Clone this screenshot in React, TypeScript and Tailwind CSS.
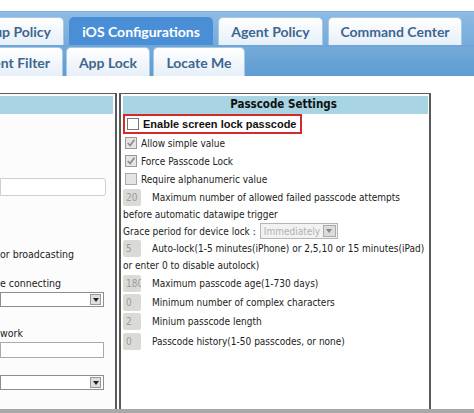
const tabText = "font-['Lato','Liberation_Sans',sans-serif] font-bold text-[14px]";
const bodyFont = "font-['DejaVu_Sans_Condensed','Liberation_Sans',sans-serif] text-[10px] text-[#222]";

function Tab({ label, w, active, edge }: { label: string; w: string; active?: boolean; edge?: boolean }) {
  return (
    <div
      className={`${w} h-full shrink-0 rounded-t-[5px] flex items-center whitespace-nowrap ${
        edge ? "justify-end pr-[12px]" : "justify-center"
      } ${tabText} ${
        active
          ? "bg-[#4a8fd6] text-white"
          : "bg-gradient-to-b from-white to-[#e6eff8] text-[#3d6690] border-x border-t border-[#a9c8e4]"
      }`}
    >
      {label}
    </div>
  );
}

function Check({ checked, bold, label }: { checked?: boolean; bold?: boolean; label: string }) {
  return (
    <div className="flex items-center gap-[4px] h-full whitespace-nowrap">
      <span
        className={`w-[12px] h-[12px] border shrink-0 flex items-center justify-center ${
          checked ? "border-[#9a9a9a] bg-[#e4e4e4]" : bold ? "border-[#777] bg-white" : "border-[#aaa] bg-[#e4e4e4]"
        }`}
      >
        {checked && (
          <svg viewBox="0 0 12 12" className="w-[10px] h-[10px]">
            <path d="M2 6 L5 9 L10 2" fill="none" stroke="#8a8a8a" strokeWidth="2" />
          </svg>
        )}
      </span>
      <span className={bold ? "font-['Liberation_Sans',sans-serif] font-bold text-[11px] text-[#111]" : ""}>{label}</span>
    </div>
  );
}

function NumRow({ value, label }: { value: string; label: string }) {
  return (
    <div className="flex items-center h-full whitespace-nowrap">
      <span className="w-[18px] h-[17px] bg-[#dcdad6] rounded-[2px] text-[#9b9b9b] pl-[3px] flex items-center overflow-hidden shrink-0">
        {value}
      </span>
      <span className="ml-[11px]">{label}</span>
    </div>
  );
}

function Select({ w }: { w: string }) {
  return (
    <div className={`${w} h-[15px] border border-[#8d8d8d] bg-white flex justify-end items-center pr-[2px]`}>
      <span className="w-[11px] h-[11px] bg-[#dedede] border border-[#999] flex items-center justify-center">
        <span className="w-0 h-0 border-x-[3px] border-x-transparent border-t-[4px] border-t-[#222]" />
      </span>
    </div>
  );
}

export default function App() {
  return (
    <div className={`w-[474px] h-[413px] overflow-hidden bg-white flex flex-col ${bodyFont}`}>
      <div className="h-[11px] bg-white shrink-0" />
      {/* tab bar */}
      <div className="h-[65px] shrink-0 bg-gradient-to-b from-[#8dbbe3] to-[#5e9cd2] border-t border-[#7fb0dc] flex flex-col">
        <div className="h-[5px]" />
        <div className="h-[28px] flex gap-[5px] ml-[-60px]">
          <Tab label="Group Policy" w="w-[124px]" edge />
          <Tab label="iOS Configurations" w="w-[144px]" active />
          <Tab label="Agent Policy" w="w-[105px]" />
          <Tab label="Command Center" w="w-[134px]" />
        </div>
        <div className="h-[2px] bg-[#6fa6d6]" />
        <div className="h-[29px] flex gap-[3px] ml-[-60px]">
          <Tab label="Content Filter" w="w-[123px]" edge />
          <Tab label="App Lock" w="w-[84px]" />
          <Tab label="Locate Me" w="w-[92px]" />
        </div>
      </div>

      {/* panels */}
      <div className="flex-1 flex mt-[17px] bg-white">
        {/* left panel (clipped) */}
        <div className="w-[117px] shrink-0 border-t border-r-2 border-[#5a5a5a] bg-[#fcfcfc] flex flex-col text-[10.5px] whitespace-nowrap">
          <div className="h-[18px] mt-[2px] mr-[2px] bg-[#a8d4e4]" />
          <div className="h-[64px]" />
          <div className="h-[18px] w-[106px] border border-[#cfcfcf] rounded-r-[3px] bg-white" />
          <div className="h-[51px]" />
          <div className="leading-[14px]">or broadcasting</div>
          <div className="h-[15px]" />
          <div className="leading-[14px]">e connecting</div>
          <div className="h-[2px]" />
          <Select w="w-[104px]" />
          <div className="h-[19px]" />
          <div className="leading-[14px]">work</div>
          <div className="h-[2px]" />
          <div className="h-[16px] w-[104px] border border-[#aaa] bg-white" />
          <div className="h-[17px]" />
          <Select w="w-[104px]" />
        </div>
        <div className="w-[2px] shrink-0" />
        {/* right panel */}
        <div className="w-[312px] shrink-0 border-t border-x-2 border-[#5a5a5a] flex flex-col pl-[2px] pr-[1px] whitespace-nowrap overflow-hidden">
          <div className="h-[18px] mt-[2px] bg-[#a8d4e4] flex items-center justify-center pl-[16px] font-bold text-[11.5px] text-[#111]">
            Passcode Settings
          </div>
          <div className="h-[20px] w-[179px] border-2 border-[#d42a2a] pl-[2px]">
            <Check bold label="Enable screen lock passcode" />
          </div>
          <div className="h-[18px] pl-[2px]">
            <Check checked label="Allow simple value" />
          </div>
          <div className="h-[18px] pl-[2px]">
            <Check checked label="Force Passcode Lock" />
          </div>
          <div className="h-[18px] pl-[2px]">
            <Check label="Require alphanumeric value" />
          </div>
          <div className="h-[18px]">
            <NumRow value="20" label="Maximum number of allowed failed passcode attempts" />
          </div>
          <div className="h-[16px] flex items-center">before automatic datawipe trigger</div>
          <div className="h-[18px] flex items-center gap-[4px]">
            <span>Grace period for device lock :</span>
            <div className="w-[78px] h-[16px] border border-[#b5b5b5] bg-[#f2f2f2] flex items-center justify-between pl-[3px] pr-[1px] text-[#b0b0b0] text-[10px]">
              <span>Immediately</span>
              <span className="w-[13px] h-[12px] bg-[#dcdcdc] border border-[#aaa] flex items-center justify-center">
                <span className="w-0 h-0 border-x-[3px] border-x-transparent border-t-[4px] border-t-[#888]" />
              </span>
            </div>
          </div>
          <div className="h-[17px]">
            <NumRow value="5" label="Auto-lock(1-5 minutes(iPhone) or 2,5,10 or 15 minutes(iPad)" />
          </div>
          <div className="h-[17px] flex items-center">or enter 0 to disable autolock)</div>
          <div className="h-[19px]">
            <NumRow value="180" label="Maximum passcode age(1-730 days)" />
          </div>
          <div className="h-[19px]">
            <NumRow value="0" label="Minimum number of complex characters" />
          </div>
          <div className="h-[19px]">
            <NumRow value="2" label="Minium passcode length" />
          </div>
          <div className="h-[20px]">
            <NumRow value="0" label="Passcode history(1-50 passcodes, or none)" />
          </div>
          <div className="flex-1" />
        </div>
        <div className="flex-1" />
      </div>
      <div className="h-[4px] shrink-0 bg-[#a9a9a9]" />
    </div>
  );
}
